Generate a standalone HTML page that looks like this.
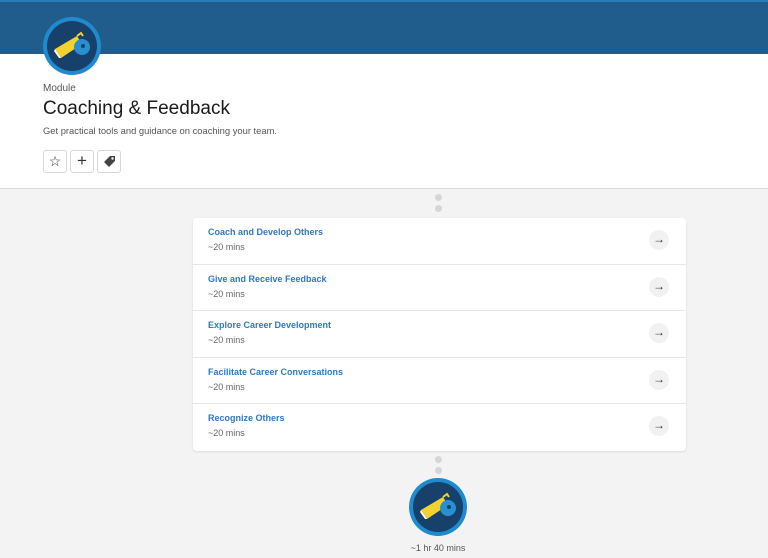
<!DOCTYPE html>
<html><head><style>
*{margin:0;padding:0;box-sizing:border-box}
body{width:768px;height:558px;overflow:hidden;background:#f3f3f3;font-family:"Liberation Sans",sans-serif;position:relative}
.top{position:absolute;left:0;top:0;width:768px;height:189px;background:#fff;border-bottom:1px solid #ddd}
.banner{position:absolute;left:0;top:0;width:768px;height:54px;background:#215d8c;border-top:2px solid #2a7ab8}
.abs{position:absolute}
.btn{position:absolute;top:150px;width:24px;height:23px;border:1px solid #d8d8d8;border-radius:3px;background:#fff}
.dot{position:absolute;width:7px;height:7px;border-radius:50%;background:#d6d6d6;left:435px}
.card{position:absolute;left:193px;top:218px;width:493px;background:#fff;border-radius:4px;box-shadow:0 1px 2px rgba(0,0,0,.1)}
.row{height:46.5px;border-bottom:1px solid #e6e6e6;position:relative}
.row:last-child{border-bottom:none}
.t{position:absolute;left:15px;top:9px;font-size:9px;font-weight:bold;color:#2f78c4}
.m{position:absolute;left:15px;top:24px;font-size:9px;color:#666}
.ar{position:absolute;left:456px;top:12px;width:20px;height:20px;border-radius:50%;background:#f1f1f1;font-size:12px;color:#333;text-align:center;line-height:19px}
</style></head><body>
<div class="top"></div>
<div class="banner"></div>
<svg class="abs" style="left:42px;top:16px" width="60" height="60" viewBox="0 0 60 60">
<circle cx="30" cy="30" r="29" fill="#1e8ad0"/><circle cx="30" cy="30" r="25" fill="#17406b"/>
<path d="M13 33 L35 20 L40 28 L19 42 Z" fill="#f2d22e"/><path d="M13 33 L19 42 L17 42 L12 35 Z" fill="#fff"/>
<circle cx="40" cy="31" r="8" fill="#2a8fd0"/><circle cx="41" cy="30" r="2" fill="#17406b"/>
<path d="M35 20 L39 17 L41 20" stroke="#f2d22e" stroke-width="2" fill="none"/>
</svg>
<div class="abs" style="left:43px;top:83px;font-size:10px;color:#555">Module</div>
<div class="abs" style="left:43px;top:98px;font-size:19px;color:#1a1a1a;letter-spacing:0">Coaching &amp; Feedback</div>
<div class="abs" style="left:43px;top:125px;font-size:9.4px;color:#555">Get practical tools and guidance on coaching your team.</div>
<div class="btn" style="left:43px;font-size:14px;text-align:center;line-height:21px;color:#333">☆</div>
<div class="btn" style="left:70px;font-size:17px;text-align:center;line-height:20px;color:#333">+</div>
<div class="btn" style="left:97px"><svg width="22" height="21" viewBox="0 0 22 21"><path d="M6 11 L12 5 L17 5 L17 10 L11 16 Z" fill="#444"/><circle cx="14.5" cy="7.5" r="1.2" fill="#fff"/></svg></div>
<div class="dot" style="top:194px"></div><div class="dot" style="top:205px"></div>
<div class="card">
<div class="row"><div class="t">Coach and Develop Others</div><div class="m">~20 mins</div><div class="ar">→</div></div>
<div class="row"><div class="t">Give and Receive Feedback</div><div class="m">~20 mins</div><div class="ar">→</div></div>
<div class="row"><div class="t">Explore Career Development</div><div class="m">~20 mins</div><div class="ar">→</div></div>
<div class="row"><div class="t">Facilitate Career Conversations</div><div class="m">~20 mins</div><div class="ar">→</div></div>
<div class="row"><div class="t">Recognize Others</div><div class="m">~20 mins</div><div class="ar">→</div></div>
</div>
<div class="dot" style="top:456px"></div><div class="dot" style="top:467px"></div>
<svg class="abs" style="left:408px;top:477px" width="60" height="60" viewBox="0 0 60 60">
<circle cx="30" cy="30" r="29" fill="#1e8ad0"/><circle cx="30" cy="30" r="25" fill="#17406b"/>
<path d="M13 33 L35 20 L40 28 L19 42 Z" fill="#f2d22e"/><path d="M13 33 L19 42 L17 42 L12 35 Z" fill="#fff"/>
<circle cx="40" cy="31" r="8" fill="#2a8fd0"/><circle cx="41" cy="30" r="2" fill="#17406b"/>
<path d="M35 20 L39 17 L41 20" stroke="#f2d22e" stroke-width="2" fill="none"/>
</svg>
<div class="abs" style="left:398px;top:543px;width:80px;text-align:center;font-size:9px;color:#555">~1 hr 40 mins</div>
</body></html>
